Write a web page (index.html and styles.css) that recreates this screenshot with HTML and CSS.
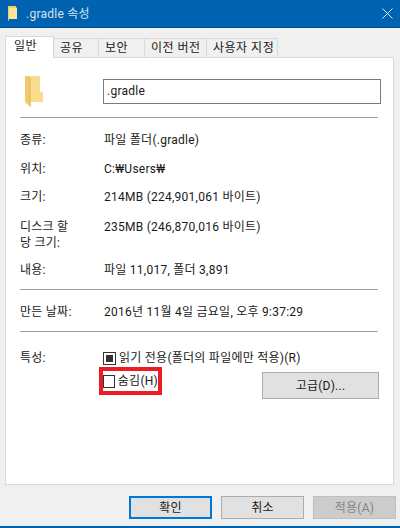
FILE: index.html
```html
<!DOCTYPE html>
<html lang="ko">
<head>
  <meta charset="UTF-8" />
  <title>.gradle 속성</title>
  <link rel="stylesheet" href="styles.css">
</head>
<body>

  <div class="titlebar">
    <svg class="title-icon" width="10" height="15" viewBox="0 0 10 15">
      <path d="M0 0H8V1L9 2V13H1V15L0 14Z" fill="#f2cf6d"/>
      <path d="M1 2H9V13H1Z" fill="#fbe49c"/>
    </svg>
    <span class="title-text">.gradle 속성</span>
    <svg class="title-close" width="11" height="11" viewBox="0 0 11 11">
      <path d="M.5.5L10.5 10.5M10.5.5L.5 10.5" stroke="#e6eff7" stroke-width="1" fill="none"/>
    </svg>
  </div>

  <div class="tabs">
    <div class="tab active">일반</div>
    <div class="tab tab-share">공유</div>
    <div class="tab tab-secure">보안</div>
    <div class="tab tab-prev">이전 버전</div>
    <div class="tab tab-custom">사용자 지정</div>
  </div>

  <div class="panel">
    <div class="head-row">
      <svg class="big-folder" width="18" height="31" viewBox="0 0 18 31">
        <path d="M5 0H15V16H18V26H5Z" fill="#f9dc8f"/>
        <path d="M0 0H5V26H5.500V31L0 26Z" fill="#f0cb6c"/>
        <path d="M4.500 2H5.500V31L4.500 30Z" fill="#dcb24f"/>
      </svg>
      <div class="name-box">.gradle</div>
    </div>
    <hr class="line">

    <div class="row row-type"><div class="label">종류:</div><div>파일 폴더(.gradle)</div></div>
    <div class="row row-where"><div class="label">위치:</div><div>C:₩Users₩</div></div>
    <div class="row row-size"><div class="label">크기:</div><div>214MB (224,901,061 바이트)</div></div>
    <div class="row row-disk"><div class="label">디스크 할<br>당 크기:</div><div>235MB (246,870,016 바이트)</div></div>
    <div class="row row-last"><div class="label">내용:</div><div>파일 11,017, 폴더 3,891</div></div>
    <hr class="line">

    <div class="row row-date"><div class="label">만든 날짜:</div><div>2016년 11월 4일 금요일, 오후 9:37:29</div></div>
    <hr class="line">

    <div class="attrs">
      <div class="label attrs-label">특성:</div>
      <div class="attrs-main">
        <div class="check-row">
          <span class="check mixed"></span>
          <span>읽기 전용(폴더의 파일에만 적용)(R)</span>
        </div>
        <div class="hidden-row">
          <div class="marked">
            <span class="check"></span>
            <span>숨김(H)</span>
          </div>
          <div class="btn btn-adv">고급(D)...</div>
        </div>
      </div>
    </div>
  </div>

  <div class="footer">
    <div class="btn btn-foot btn-default">확인</div>
    <div class="btn btn-foot">취소</div>
    <div class="btn btn-foot btn-off">적용(A)</div>
  </div>
  <div class="bottom-line"></div>

</body>
</html>
```

FILE: styles.css
```css
* {
  box-sizing: border-box;
}

body {
  margin: 0;
  width: 400px;
  height: 528px;
  overflow: hidden;
  background-color: #f0f0f0;
  color: #1a1a1a;
  font-family: Roboto, "Noto Sans CJK KR", sans-serif;
  font-size: 12px;
  line-height: 16px;
  letter-spacing: 0.25px;
}

.titlebar {
  display: flex;
  align-items: center;
  height: 28px;
  padding: 0 8px;
  background-color: #0063b1;
  border-bottom: 1px solid #00508f;
  color: #d5e4f1;
}

.title-text {
  margin-left: 8px;
}

.title-close {
  margin-left: auto;
  margin-right: -1px;
}

.tabs {
  display: flex;
  align-items: flex-end;
  height: 29px;
  padding-left: 5px;
}

.tab {
  height: 19px;
  padding-left: 6px;
  border: 1px solid #d9d9d9;
  border-bottom: none;
  border-left: none;
  background-color: #f0f0f0;
  line-height: 19px;
  letter-spacing: 0.5px;
}

.tab-share {
  width: 45px;
}

.tab-secure {
  width: 46px;
}

.tab-prev {
  width: 62px;
}

.tab-custom {
  width: 71px;
}

.tab.active {
  position: relative;
  width: 49px;
  height: 22px;
  margin-bottom: -1px;
  padding-left: 8px;
  border-left: 1px solid #d9d9d9;
  background-color: #fff;
  line-height: 18px;
}

.panel {
  height: 428px;
  margin: 0 6px 0 5px;
  padding: 21px 15px 0 14px;
  background-color: #fff;
  border: 1px solid #d9d9d9;
}

.head-row {
  display: flex;
  align-items: flex-start;
}

.big-folder {
  margin-left: 5px;
  margin-top: -3px;
}

.name-box {
  width: 278px;
  height: 25px;
  margin-left: auto;
  margin-right: -3px;
  padding-left: 3px;
  border: 1px solid #7a7a7a;
  line-height: 22px;
}

.line {
  height: 1px;
  margin: 0;
  border: none;
  background-color: #a0a0a0;
}

.head-row + .line {
  margin-top: 10px;
}

.row {
  display: flex;
}

.label {
  width: 84px;
  flex-shrink: 0;
}

.row-type {
  margin-top: 14px;
}

.row-where {
  margin-top: 13px;
}

.row-size {
  margin-top: 12px;
}

.row-disk {
  margin-top: 14px;
}

.row-last {
  margin-top: 11px;
  margin-bottom: 11px;
}

.row-date {
  margin-top: 14px;
  margin-bottom: 11px;
}

.attrs {
  display: flex;
  margin-top: 18px;
}

.attrs-main {
  flex: 1;
}

.check-row {
  display: flex;
  align-items: center;
  gap: 3px;
  height: 16px;
  margin-left: -1px;
}

.check {
  display: flex;
  align-items: center;
  justify-content: center;
  width: 13px;
  height: 13px;
  border: 1px solid #333;
  background-color: #fff;
}

.mixed::before {
  content: "";
  width: 7px;
  height: 7px;
  background-color: #333;
}

.hidden-row {
  display: flex;
  align-items: flex-start;
  margin-top: 5px;
}

.marked {
  display: flex;
  align-items: center;
  gap: 3px;
  width: 55px;
  height: 20px;
  white-space: nowrap;
  margin-left: -1px;
  outline: 4px solid #ed1c24;
}

.btn {
  display: flex;
  align-items: center;
  justify-content: center;
  height: 27px;
  background-color: #e1e1e1;
  border: 1px solid #adadad;
}

.btn-adv {
  width: 117px;
  margin-left: auto;
  margin-top: 1px;
  margin-right: -1px;
}

.footer {
  display: flex;
  justify-content: flex-end;
  gap: 9px;
  height: 23px;
  margin-top: 11px;
  padding-right: 4px;
}

.btn-foot {
  width: 83px;
  height: 23px;
}

.btn-default {
  border: 2px solid #0078d7;
}

.btn-off {
  background-color: #cccccc;
  border-color: #bfbfbf;
  color: #838383;
}

.bottom-line {
  height: 2px;
  margin-top: 7px;
  background-color: #0063b1;
}
```
